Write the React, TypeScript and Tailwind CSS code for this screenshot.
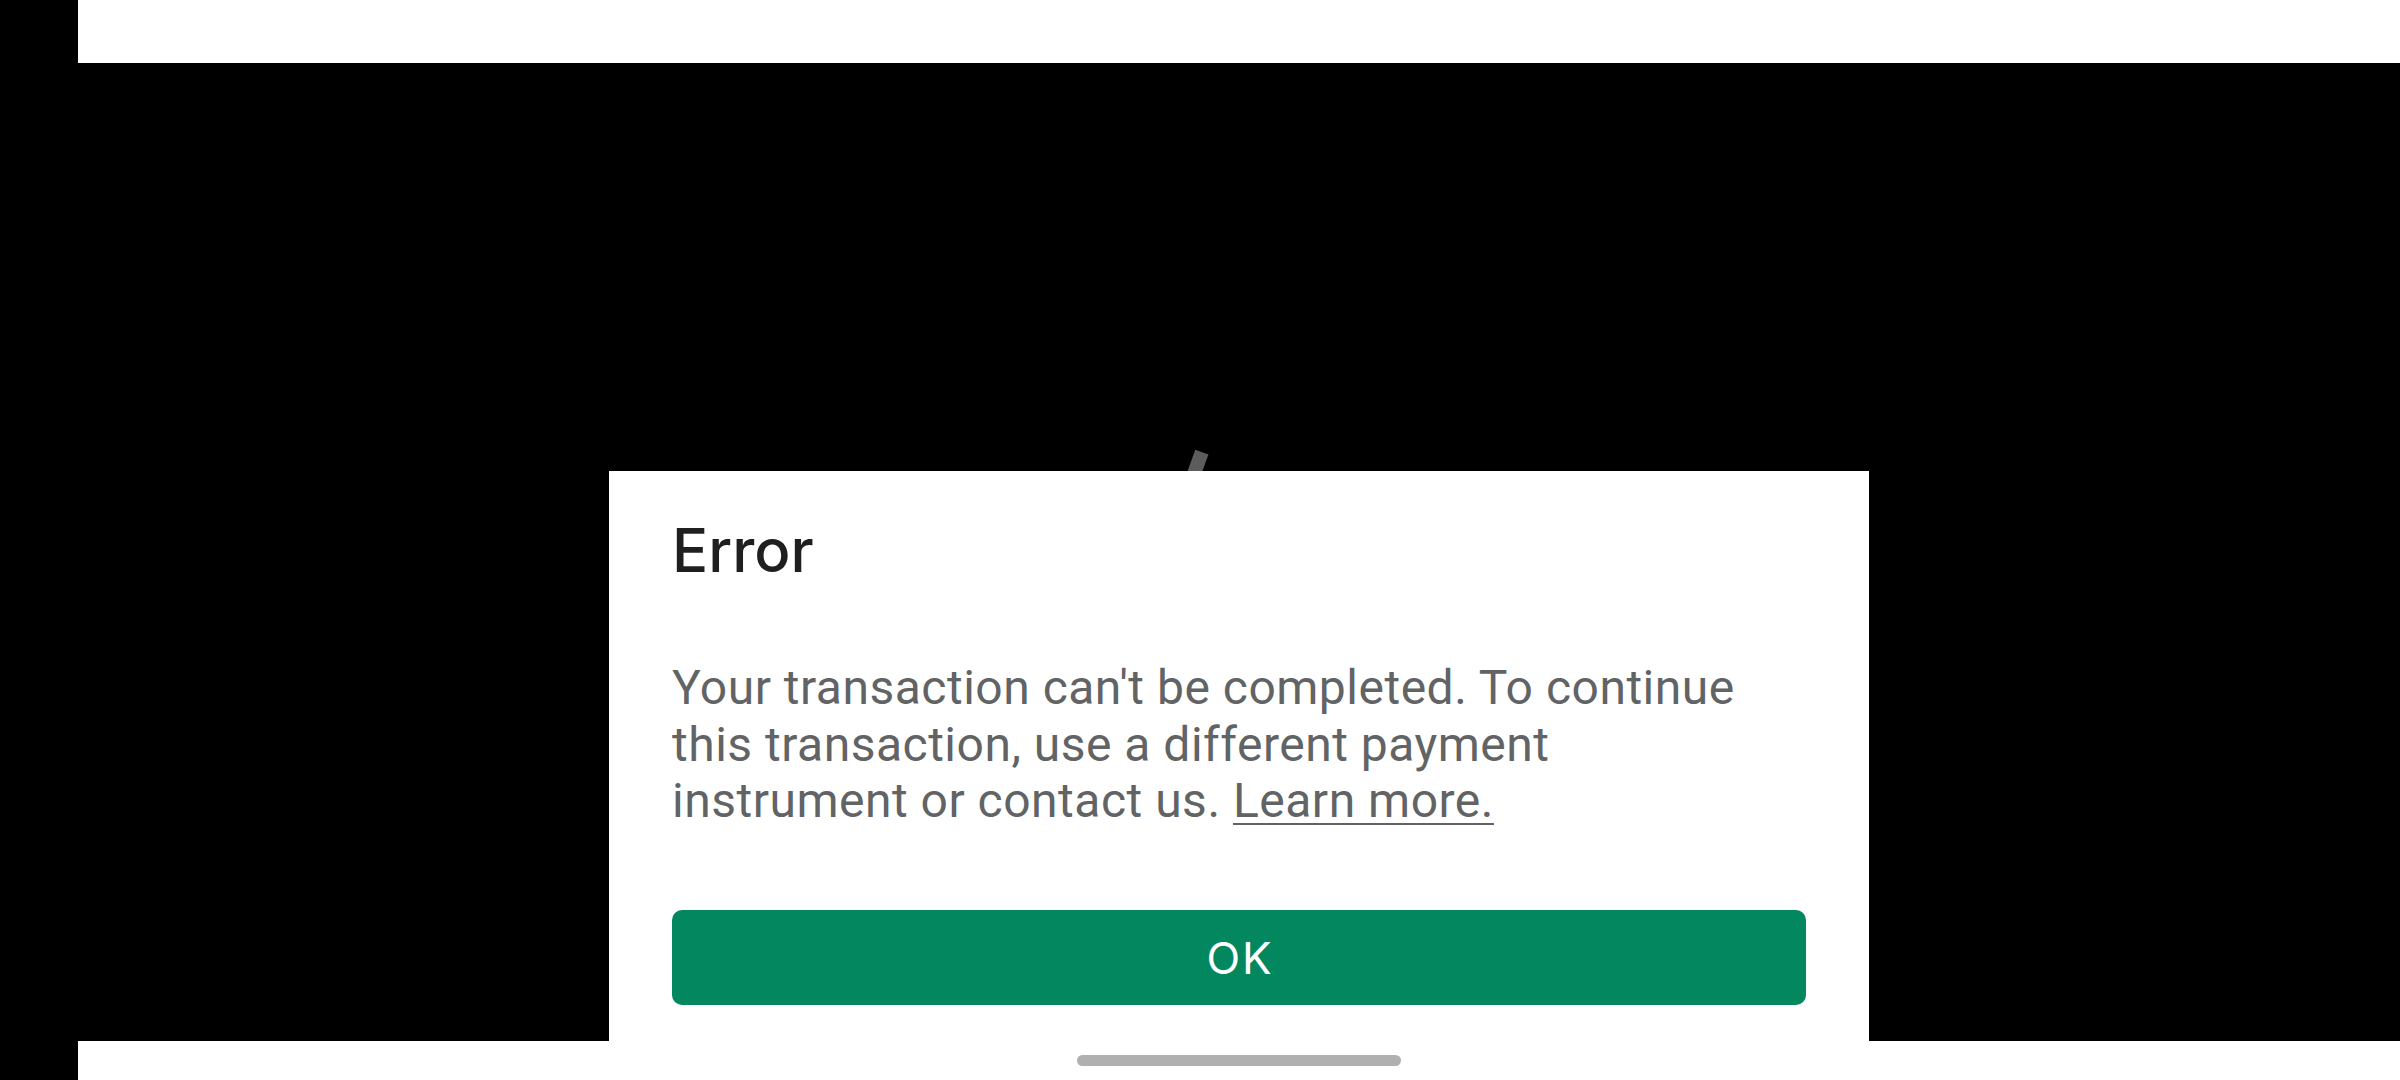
export default function App() {
  return (
    <div className="flex h-[1080px] w-[2400px] overflow-hidden bg-black">
      <div className="w-[78px] shrink-0 bg-black" />
      <div className="flex flex-1 flex-col">
        <div className="h-[63px] shrink-0 bg-white" />
        <div className="relative flex flex-1 items-end justify-center bg-black">
          <div className="absolute left-[1110px] top-[388px] h-[40px] w-[14px] rotate-[20deg] bg-[#5c5c5c]" />
          <div className="relative z-10 w-[1260px] bg-white px-[63px] pt-[43px] pb-[36px]">
            <h1 className="text-[60px] leading-[72px] font-medium text-[#1f1f1f] [font-family:Inter,'Noto_Sans',sans-serif]">
              Error
            </h1>
            <p className="mt-[74px] text-[48px] leading-[56.5px] tracking-[0.5px] text-[#616365] [font-family:Roboto,'Noto_Sans',sans-serif]">
              Your transaction can't be completed. To continue
              <br />
              this transaction, use a different payment
              <br />
              instrument or contact us.{" "}
              <span className="underline decoration-[2px] underline-offset-[6px]">Learn more.</span>
            </p>
            <button className="mt-[80.5px] flex h-[95px] w-full items-center justify-center rounded-[10px] bg-[#03875f] pl-[2px] text-[44px] font-normal tracking-[2px] text-white [font-family:Inter,'Noto_Sans',sans-serif]">
              OK
            </button>
          </div>
        </div>
        <div className="flex h-[39px] shrink-0 items-start justify-center bg-white pt-[14px]">
          <div className="h-[11px] w-[324px] rounded-full bg-[#b0b0b0]" />
        </div>
      </div>
    </div>
  );
}
